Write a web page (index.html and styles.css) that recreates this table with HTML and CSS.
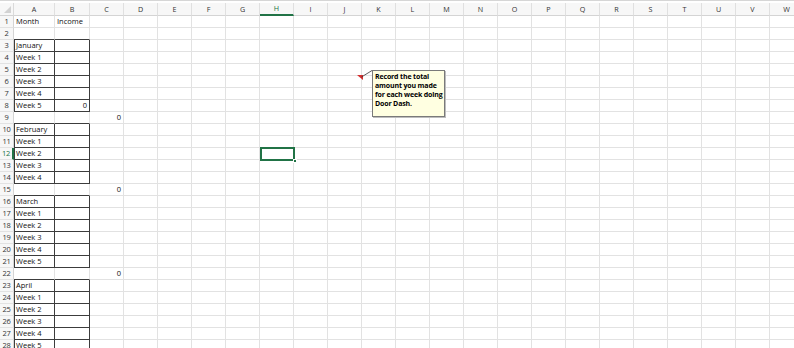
FILE: index.html
```html
<!DOCTYPE html>
<html>
<head>
<meta charset="utf-8">
<link rel="stylesheet" href="styles.css">
</head>
<body>
<div class="sheet">
  <div class="topline"></div>
  <div class="colhead">
    <div class="corner"><span class="tri"></span></div>
    <div class="ch">A</div><div class="ch">B</div><div class="ch">C</div><div class="ch">D</div>
    <div class="ch">E</div><div class="ch">F</div><div class="ch">G</div><div class="ch sel">H</div>
    <div class="ch">I</div><div class="ch">J</div><div class="ch">K</div><div class="ch">L</div>
    <div class="ch">M</div><div class="ch">N</div><div class="ch">O</div><div class="ch">P</div>
    <div class="ch">Q</div><div class="ch">R</div><div class="ch">S</div><div class="ch">T</div>
    <div class="ch">U</div><div class="ch">V</div><div class="ch">W</div>
  </div>

  <div class="row"><div class="rh">1</div><div class="c">Month</div><div class="c">Income</div><div class="c"></div><div class="rest"></div></div>
  <div class="row"><div class="rh">2</div><div class="c bt"></div><div class="c bt"></div><div class="c"></div><div class="rest"></div></div>
  <div class="row"><div class="rh">3</div><div class="c ba">January</div><div class="c bb"></div><div class="c"></div><div class="rest"></div></div>
  <div class="row"><div class="rh">4</div><div class="c ba">Week 1</div><div class="c bb"></div><div class="c"></div><div class="rest"></div></div>
  <div class="row"><div class="rh">5</div><div class="c ba">Week 2</div><div class="c bb"></div><div class="c"></div><div class="rest"></div></div>
  <div class="row"><div class="rh">6</div><div class="c ba">Week 3</div><div class="c bb"></div><div class="c"></div><div class="rest"></div></div>
  <div class="row"><div class="rh">7</div><div class="c ba">Week 4</div><div class="c bb"></div><div class="c"></div><div class="rest"></div></div>
  <div class="row"><div class="rh">8</div><div class="c ba">Week 5</div><div class="c bb num">0</div><div class="c"></div><div class="rest"></div></div>
  <div class="row"><div class="rh">9</div><div class="c bt"></div><div class="c bt"></div><div class="c num">0</div><div class="rest"></div></div>
  <div class="row"><div class="rh">10</div><div class="c ba">February</div><div class="c bb"></div><div class="c"></div><div class="rest"></div></div>
  <div class="row"><div class="rh">11</div><div class="c ba">Week 1</div><div class="c bb"></div><div class="c"></div><div class="rest"></div></div>
  <div class="row"><div class="rh act">12</div><div class="c ba">Week 2</div><div class="c bb"></div><div class="c"></div><div class="rest"></div></div>
  <div class="row"><div class="rh">13</div><div class="c ba">Week 3</div><div class="c bb"></div><div class="c"></div><div class="rest"></div></div>
  <div class="row"><div class="rh">14</div><div class="c ba">Week 4</div><div class="c bb"></div><div class="c"></div><div class="rest"></div></div>
  <div class="row"><div class="rh">15</div><div class="c bt"></div><div class="c bt"></div><div class="c num">0</div><div class="rest"></div></div>
  <div class="row"><div class="rh">16</div><div class="c ba">March</div><div class="c bb"></div><div class="c"></div><div class="rest"></div></div>
  <div class="row"><div class="rh">17</div><div class="c ba">Week 1</div><div class="c bb"></div><div class="c"></div><div class="rest"></div></div>
  <div class="row"><div class="rh">18</div><div class="c ba">Week 2</div><div class="c bb"></div><div class="c"></div><div class="rest"></div></div>
  <div class="row"><div class="rh">19</div><div class="c ba">Week 3</div><div class="c bb"></div><div class="c"></div><div class="rest"></div></div>
  <div class="row"><div class="rh">20</div><div class="c ba">Week 4</div><div class="c bb"></div><div class="c"></div><div class="rest"></div></div>
  <div class="row"><div class="rh">21</div><div class="c ba">Week 5</div><div class="c bb"></div><div class="c"></div><div class="rest"></div></div>
  <div class="row"><div class="rh">22</div><div class="c bt"></div><div class="c bt"></div><div class="c num">0</div><div class="rest"></div></div>
  <div class="row"><div class="rh">23</div><div class="c ba">April</div><div class="c bb"></div><div class="c"></div><div class="rest"></div></div>
  <div class="row"><div class="rh">24</div><div class="c ba">Week 1</div><div class="c bb"></div><div class="c"></div><div class="rest"></div></div>
  <div class="row"><div class="rh">25</div><div class="c ba">Week 2</div><div class="c bb"></div><div class="c"></div><div class="rest"></div></div>
  <div class="row"><div class="rh">26</div><div class="c ba">Week 3</div><div class="c bb"></div><div class="c"></div><div class="rest"></div></div>
  <div class="row"><div class="rh">27</div><div class="c ba">Week 4</div><div class="c bb"></div><div class="c"></div><div class="rest"></div></div>
  <div class="row"><div class="rh">28</div><div class="c ba">Week 5</div><div class="c bb"></div><div class="c"></div><div class="rest"></div></div>

  <div class="selection"><span class="handle"></span></div>

  <div class="indicator"></div>
  <svg class="connector" width="12" height="8" viewBox="0 0 12 8"><line x1="0.5" y1="7" x2="11" y2="0.5" stroke="#333" stroke-width="0.8"/></svg>
  <div class="comment">Record the total amount you made for each week doing Door Dash.</div>
</div>
</body>
</html>
```
FILE: styles.css
```css
html, body {
  margin: 0;
  padding: 0;
  background: #ffffff;
}
body {
  font-family: "Open Sans", "Noto Sans", "Liberation Sans", sans-serif;
  font-size: 7.5px;
  color: #111;
  overflow: hidden;
  width: 794px;
  height: 348px;
}
.sheet {
  position: relative;
  width: 810px;
  height: 348px;
  overflow: hidden;
}
.topline {
  height: 2px;
  border-top: 1px solid #d6d6d6;
  background: #ffffff;
}
.colhead {
  display: grid;
  grid-template-columns: 14px 41px 35px repeat(21, 34px);
  height: 13px;
  background: #f7f7f7;
}
.corner {
  position: relative;
  border-right: 1px solid #dadada;
  border-bottom: 1px solid #d4d4d4;
}
.corner .tri {
  position: absolute;
  right: 2px;
  bottom: 2px;
  width: 0;
  height: 0;
  border-left: 7px solid transparent;
  border-bottom: 7px solid #d2d2d2;
}
.ch {
  border-right: 1px solid #e0e0e0;
  border-bottom: 1px solid #d4d4d4;
  text-align: center;
  line-height: 12px;
  color: #333;
  font-size: 7.2px;
}
.ch.sel {
  color: #217346;
  border-bottom: 2px solid #217346;
  line-height: 11px;
}
.row {
  display: grid;
  grid-template-columns: 14px 41px 35px 34px 1fr;
  height: 12px;
}
.rh {
  background: #f7f7f7;
  border-right: 1px solid #d4d4d4;
  border-bottom: 1px solid #e2e2e2;
  text-align: center;
  line-height: 11px;
  color: #333;
  font-size: 7.5px;
  letter-spacing: -0.2px;
}
.rh.act {
  color: #217346;
  border-right: 2px solid #217346;
}
.c {
  border-right: 1px solid #e2e2e2;
  border-bottom: 1px solid #e2e2e2;
  line-height: 11px;
  padding: 0 2px;
  white-space: nowrap;
  overflow: hidden;
}
.c.num {
  text-align: right;
}
.c.bt {
  border-bottom-color: #3c3c3c;
}
.c.ba {
  border-right-color: #3c3c3c;
  border-bottom-color: #3c3c3c;
  box-shadow: inset 1px 0 0 #3c3c3c;
}
.c.bb {
  border-right-color: #3c3c3c;
  border-bottom-color: #3c3c3c;
}
.rest {
  border-bottom: 1px solid #e2e2e2;
  background: repeating-linear-gradient(to right, transparent 0 33px, #e2e2e2 33px 34px);
}
.selection {
  position: absolute;
  left: 260px;
  top: 147px;
  width: 31px;
  height: 10px;
  border: 2px solid #217346;
}
.selection .handle {
  position: absolute;
  right: -4px;
  bottom: -4px;
  width: 4px;
  height: 4px;
  background: #217346;
  border: 1px solid #fff;
  box-sizing: border-box;
}
.indicator {
  position: absolute;
  left: 357px;
  top: 75px;
  width: 0;
  height: 0;
  border-top: 5px solid #d32f2f;
  border-left: 6px solid transparent;
}
.connector {
  position: absolute;
  left: 361px;
  top: 70px;
}
.comment {
  position: absolute;
  left: 372px;
  top: 70px;
  width: 68px;
  height: 43px;
  padding: 1px 1px 1px 2px;
  background: #ffffe1;
  border: 1px solid #7a7a7a;
  box-shadow: 1px 1px 0 #bdbdbd;
  font-weight: bold;
  font-size: 7px;
  letter-spacing: -0.15px;
  line-height: 9px;
  color: #000;
}
```
